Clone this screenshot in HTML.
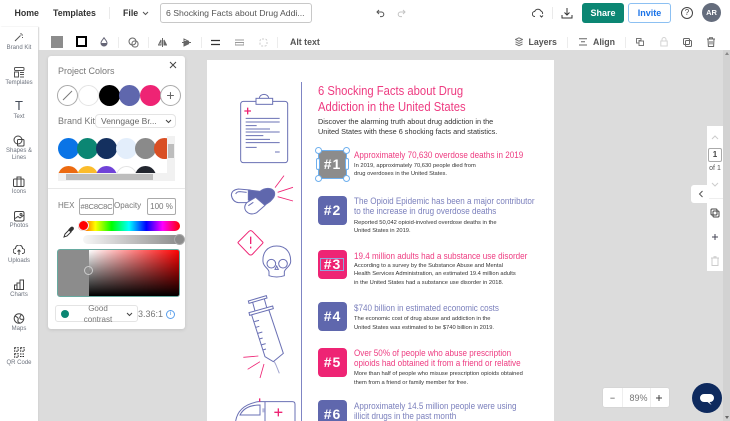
<!DOCTYPE html>
<html><head><meta charset="utf-8"><style>
*{box-sizing:border-box}
html,body{margin:0;padding:0;width:730px;height:421px;overflow:hidden;background:#dcdcdc;font-family:"Liberation Sans",sans-serif}
.a{position:absolute;white-space:nowrap}
#r{position:relative;width:730px;height:421px;overflow:hidden}
.side{font-size:6px;color:#6c727d;text-align:center;width:38px;left:0;line-height:7px;white-space:normal}
.ic{position:absolute;fill:none;stroke:#3a4150;stroke-width:1}
.c{position:absolute;border-radius:50%;width:21px;height:21px}
.num{position:absolute;left:318px;width:29px;height:29px;border-radius:4px;color:#fff;font-size:14px;font-weight:bold;text-align:center;line-height:29px;letter-spacing:1px}
.h{position:absolute;left:354px;font-size:9px;line-height:10.300px;white-space:nowrap;transform:scaleX(.9);transform-origin:0 0}
.p{position:absolute;left:354px;font-size:5.750px;line-height:8.600px;color:#333;white-space:nowrap}
.pk{color:#ee3b80}.pu{color:#7a7fbc}
.sep{position:absolute;top:37px;width:1px;height:11px;background:#ececec}
</style></head><body><div id="r">

<!-- top bar -->
<div class="a" style="left:0;top:0;width:730px;height:27px;background:#fff;box-shadow:0 1px 1px #eee"></div>
<div class="a" style="left:14.500px;top:8px;font-size:8.800px;font-weight:bold;color:#333">Home</div>
<div class="a" style="left:53px;top:8px;font-size:8.800px;font-weight:bold;color:#333">Templates</div>
<div class="a" style="left:109px;top:7px;width:1px;height:12px;background:#eaeaea"></div>
<div class="a" style="left:123px;top:8px;font-size:8.800px;font-weight:bold;color:#333">File</div>
<svg class="ic" style="left:142px;top:11px;stroke:#555" width="7" height="5"><path d="M1 1l2.500 2.500L6 1"/></svg>
<div class="a" style="left:160px;top:3px;width:152px;height:20px;border:1px solid #c8c8c8;border-radius:3px;font-size:8.700px;color:#555;line-height:18px;padding-left:5px">6 Shocking Facts about Drug Addi...</div>
<svg class="ic" style="left:375px;top:8px;stroke:#555" width="10" height="10"><path d="M2 4h4.500a2.300 2.300 0 0 1 0 4.600H5M4 2L2 4l2 2"/></svg>
<svg class="ic" style="left:397px;top:8px;stroke:#c4c4c4" width="10" height="10"><path d="M8 4H3.500a2.300 2.300 0 0 0 0 4.600H5M6 2l2 2-2 2"/></svg>
<svg class="ic" style="left:532px;top:8px;stroke:#444" width="12" height="10"><path d="M3 8.500a2.500 2.500 0 0 1-.3-5A3.500 3.500 0 0 1 9 3a2.500 2.500 0 0 1 1.500 3M8 7.500l1.500 1.500 1.500-1.500"/></svg>
<div class="a" style="left:552px;top:7px;width:1px;height:12px;background:#eaeaea"></div>
<svg class="ic" style="left:561px;top:7px;stroke:#333" width="12" height="12"><path d="M6 1v7M3.500 5.500L6 8l2.500-2.500M1 8v3h10V8"/></svg>
<div class="a" style="left:582px;top:3px;width:42px;height:20px;background:#0b8673;border-radius:3px;color:#fff;font-weight:bold;font-size:9px;text-align:center;line-height:20px">Share</div>
<div class="a" style="left:628px;top:3px;width:43px;height:20px;background:#fff;border:1px solid #8cc0f2;border-radius:3px;color:#1a73e8;font-weight:bold;font-size:9px;text-align:center;line-height:18px">Invite</div>
<div class="a" style="left:681px;top:7px;width:12px;height:12px;border:1px solid #444;border-radius:50%;color:#444;font-size:8px;text-align:center;line-height:10px">?</div>
<div class="a" style="left:702px;top:3px;width:19px;height:19px;border-radius:50%;background:#646c7c;color:#fff;font-size:7.500px;font-weight:bold;text-align:center;line-height:19px">AR</div>

<!-- toolbar -->
<div class="a" style="left:38px;top:27px;width:692px;height:23px;background:#fff"></div>
<div class="a" style="left:51px;top:36px;width:12px;height:12px;background:#8c8c8c"></div>
<div class="a" style="left:76px;top:36px;width:11px;height:11px;border:2.500px solid #000;background:#fff"></div>
<svg class="ic" style="left:100px;top:37px;stroke:#667" width="8" height="10"><path d="M4 .8C3 2.500 1 4 1 6a3 3 0 0 0 6 0C7 4 5 2.500 4 .8z"/><path d="M1.500 6h5v1.500l-1.500 1h-2l-1.500-1z" fill="#667" stroke="none"/></svg>
<div class="sep" style="left:118px"></div>
<svg class="ic" style="left:128px;top:37px;stroke:#666" width="11" height="11"><circle cx="4.500" cy="4.500" r="3.500"/><rect x="4" y="4" width="6" height="6" rx="2.500"/></svg>
<div class="sep" style="left:148px"></div>
<svg class="ic" style="left:158px;top:38px;stroke:#666" width="9" height="9"><path d="M4.500 0v9M3 2v5H.5z"/><path d="M6 2v5h2.500z" fill="#666"/></svg>
<svg class="ic" style="left:182px;top:38px;stroke:#666" width="9" height="9"><path d="M0 4.500h9M2 3.500V1l5 2.500z"/><path d="M2 5.500V8l5-2.500z" fill="#666"/></svg>
<div class="sep" style="left:201px"></div>
<svg class="ic" style="left:211px;top:39px;stroke:#333" width="9" height="7"><path d="M0 1.500h9M0 5.500h9" stroke-width="1.200"/></svg>
<svg class="ic" style="left:235px;top:39px;stroke:#999" width="9" height="7"><path d="M0 1h9M0 3.500h9v2.500H0z"/></svg>
<svg class="ic" style="left:259px;top:38px;stroke:#ccc;stroke-dasharray:2 1.500" width="9" height="9"><rect x="1" y="1" width="7" height="7" rx="2"/></svg>
<div class="sep" style="left:277px"></div>
<div class="a" style="left:290px;top:37px;font-size:8.800px;font-weight:bold;color:#555">Alt text</div>
<svg class="ic" style="left:515px;top:37px;stroke:#777" width="8" height="10"><path d="M4 .8l3.500 1.700L4 4.200.5 2.500zM.5 4.800l3.500 1.700 3.500-1.700M.5 7l3.500 1.700L7.500 7"/></svg>
<div class="a" style="left:528.500px;top:37px;font-size:8.800px;font-weight:bold;color:#555">Layers</div>
<div class="sep" style="left:567px"></div>
<svg class="ic" style="left:579px;top:38px;stroke:#666" width="8" height="8"><path d="M0 .8h8M2 3.800h4M0 7h8"/></svg>
<div class="a" style="left:593px;top:37px;font-size:8.800px;font-weight:bold;color:#555">Align</div>
<div class="sep" style="left:625px"></div>
<svg class="ic" style="left:636px;top:38px;stroke:#777" width="8" height="8"><path d="M.5.500h4.500v2H3v2.500H.5zM3 3h4.500v4.500H3z"/></svg>
<svg class="ic" style="left:660px;top:37px;stroke:#d4d4d4" width="8" height="10"><rect x=".8" y="4" width="6.400" height="5"/><path d="M2 4V2.500a2 2 0 0 1 4 0V4"/></svg>
<svg class="ic" style="left:683px;top:38px;stroke:#666" width="9" height="9"><rect x=".5" y=".5" width="6" height="6" rx="1"/><rect x="2.500" y="2.500" width="6" height="6" rx="1"/></svg>
<svg class="ic" style="left:707px;top:37px;stroke:#666" width="8" height="10"><path d="M0 2h8M2.500 2V.7h3V2M1 2l.4 7.500h5.200L7 2M3 4v3.500M5 4v3.500"/></svg>

<!-- scrollbar -->
<div class="a" style="left:723px;top:50px;width:7px;height:371px;background:#d2d2d2"></div>
<div class="a" style="left:725px;top:52px;border-left:2px solid transparent;border-right:2px solid transparent;border-bottom:3px solid #888"></div>
<div class="a" style="left:725px;top:416px;border-left:2px solid transparent;border-right:2px solid transparent;border-top:3px solid #666"></div>

<!-- sidebar -->
<div class="a" style="left:0;top:27px;width:38px;height:394px;background:#fff;box-shadow:1px 0 1px #d4d4d4"></div>
<svg class="ic" style="left:14px;top:32px;stroke:#555" width="10" height="10"><path d="M1 9l5.500-5.500M7 1v1.500M9 3H7.500M8.500 5v1" /></svg>
<div class="a side" style="top:45px">Brand Kit</div>
<svg class="ic" style="left:14px;top:67px;stroke:#555" width="11" height="11"><rect x=".5" y=".5" width="9.500" height="3" rx="1"/><rect x=".5" y="5" width="4" height="5"/><path d="M6 5.500h4M6 7.500h4M6 10h4"/></svg>
<div class="a side" style="top:79.500px">Templates</div>
<div class="a" style="left:0;width:38px;top:99px;text-align:center;font-size:13px;line-height:14px;color:#444b58">T</div>
<div class="a side" style="top:113.500px">Text</div>
<svg class="ic" style="left:13px;top:135px;stroke:#444" width="12" height="12"><circle cx="5" cy="5" r="4"/><rect x="4.500" y="4.500" width="6.500" height="6.500" rx="1"/></svg>
<div class="a side" style="top:148px;line-height:7px">Shapes &amp;<br>Lines</div>
<svg class="ic" style="left:13px;top:176px;stroke:#444" width="12" height="11"><rect x=".5" y="3" width="10.500" height="7.500" rx="1"/><path d="M4 3V1h4v2M4 3v7.500M8 3v7.500"/></svg>
<div class="a side" style="top:189px">Icons</div>
<svg class="ic" style="left:14px;top:211px;stroke:#444" width="11" height="11"><rect x=".5" y=".5" width="9.500" height="9.500" rx="1.500"/><path d="M1 7.500l3-2 2 1.500 4-3"/><circle cx="7" cy="3.500" r="1"/></svg>
<div class="a side" style="top:223px">Photos</div>
<svg class="ic" style="left:13px;top:245px;stroke:#444" width="12" height="10"><path d="M3 8.500a2.500 2.500 0 0 1-.5-5A3.500 3.500 0 0 1 9.500 3.500 2.500 2.500 0 0 1 9 8.500M6 10V5M4.500 6.500L6 5l1.500 1.500"/></svg>
<div class="a side" style="top:257.500px">Uploads</div>
<svg class="ic" style="left:13px;top:279px;stroke:#444" width="12" height="11"><path d="M1 10.500h10M1.500 10.500V6h2.500v4.500M4 10.500V4h3v6.500M7 10.500V1h3.500v9.500"/></svg>
<div class="a side" style="top:291.500px">Charts</div>
<svg class="ic" style="left:13px;top:313px;stroke:#444" width="12" height="11"><circle cx="6" cy="5.500" r="4.800"/><path d="M2 3c2 1 4 2 3 4s2 3 2 3M8 1.500c0 2-2 2-1 4s3 0 4 1"/></svg>
<div class="a side" style="top:325.500px">Maps</div>
<svg class="ic" style="left:14px;top:347px;stroke:#222;stroke-dasharray:1.500 1" width="11" height="11"><rect x=".7" y=".7" width="3.500" height="3.500"/><rect x="6.700" y=".7" width="3.500" height="3.500"/><rect x=".7" y="6.700" width="3.500" height="3.500"/><path d="M6 7h4M6 9.500h4"/></svg>
<div class="a side" style="top:360px">QR Code</div>

<!-- color panel -->
<div class="a" style="left:48px;top:56px;width:137px;height:273px;background:#fff;border-radius:3px;box-shadow:0 1px 3px #c4c4c4"></div>
<div class="a" style="left:58px;top:66px;font-size:9px;color:#777">Project Colors</div>
<svg class="ic" style="left:169px;top:61px;stroke:#444" width="8" height="8"><path d="M1 1l6 6M7 1L1 7"/></svg>
<div class="c" style="left:57px;top:85px;border:1px solid #aaa;background:#fff"></div>
<svg class="ic" style="left:62px;top:90px;stroke:#777" width="11" height="11"><path d="M1 10L10 1"/></svg>
<div class="c" style="left:78px;top:85px;border:1px solid #e4e4e4;background:#fff"></div>
<div class="c" style="left:99px;top:85px;background:#000"></div>
<div class="c" style="left:119px;top:85px;background:#5f67ad"></div>
<div class="c" style="left:140px;top:85px;background:#ee2474"></div>
<div class="c" style="left:160px;top:85px;border:1px solid #aaa;background:#fff;color:#666;font-size:14px;line-height:18px;text-align:center">+</div>
<div class="a" style="left:58px;top:116px;font-size:9px;color:#777">Brand Kit</div>
<div class="a" style="left:95px;top:114px;width:81px;height:14px;border:1px solid #e4e4e4;border-radius:4px;font-size:8.500px;color:#666;line-height:13px;padding-left:5px">Venngage Br...</div>
<svg class="ic" style="left:165px;top:119px;stroke:#444" width="7" height="5"><path d="M1 1l2.500 2.500L6 1"/></svg>

<div class="a" style="left:58px;top:136px;width:109px;height:37px;overflow:hidden">
<div class="c" style="left:0;top:2px;background:#0a74e6"></div>
<div class="c" style="left:19px;top:2px;background:#0b8673"></div>
<div class="c" style="left:38px;top:2px;background:#14305f"></div>
<div class="c" style="left:58px;top:2px;background:#e3eefb"></div>
<div class="c" style="left:77px;top:2px;background:#8a8a8a"></div>
<div class="c" style="left:96px;top:2px;background:#d94f24"></div>
<div class="c" style="left:0;top:30px;background:#ec6a10"></div>
<div class="c" style="left:19px;top:30px;background:#fbbc2c"></div>
<div class="c" style="left:38px;top:30px;background:#7043d8"></div>
<div class="c" style="left:58px;top:30px;background:#fff;border:1px solid #e4e4e4"></div>
<div class="c" style="left:77px;top:30px;background:#22262f"></div>
</div>
<div class="a" style="left:167px;top:136px;width:8px;height:45px;background:#f1f1f1"></div>
<div class="a" style="left:168px;top:144px;width:6px;height:14px;background:#bdbdbd"></div>
<div class="a" style="left:58px;top:173px;width:117px;height:8px;background:#f1f1f1"></div>
<div class="a" style="left:66px;top:174px;width:87px;height:6px;background:#bdbdbd"></div>
<div class="a" style="left:48px;top:188px;width:137px;height:1px;background:#e8e8e8"></div>

<div class="a" style="left:58px;top:201px;font-size:8px;color:#777">HEX</div>
<div class="a" style="left:79px;top:198px;width:35px;height:17px;border:1px solid #aaa;border-radius:2px;font-size:7.600px;letter-spacing:-.2px;color:#777;line-height:15px;text-align:center;overflow:hidden">#8C8C8C</div>
<div class="a" style="left:114px;top:201px;font-size:8px;color:#777">Opacity</div>
<div class="a" style="left:147px;top:198px;width:29px;height:17px;border:1px solid #aaa;border-radius:2px;font-size:8px;color:#777;line-height:15px;text-align:center">100 %</div>
<svg class="ic" style="left:63px;top:226px;stroke:#333" width="11" height="12"><path d="M1 11l1-3 4-4 2 2-4 4z"/><path d="M6 3.500L8 1.500a1.300 1.300 0 0 1 2 2L8 5.500z" fill="#333"/></svg>
<div class="a" style="left:78px;top:221px;width:102px;height:10px;border-radius:5px;background:linear-gradient(90deg,#f00,#ff0 17%,#0f0 33%,#0ff 50%,#00f 67%,#f0f 83%,#f00)"></div>
<div class="a" style="left:78px;top:220px;width:11px;height:11px;border-radius:50%;background:#f00;border:1px solid #eee"></div>
<div class="a" style="left:83px;top:235px;width:97px;height:9px;border-radius:5px;background:linear-gradient(90deg,#f6f6f6,#8c8c8c)"></div>
<div class="a" style="left:174px;top:234px;width:11px;height:11px;border-radius:50%;background:#8c8c8c;border:1px solid #aaa"></div>
<div class="a" style="left:57px;top:249px;width:123px;height:48px;border:1px solid #67aaa0;border-radius:3px;overflow:hidden;background:#8c8c8c">
<div class="a" style="left:31px;top:0;width:91px;height:46px;background:linear-gradient(to bottom,transparent,#000),linear-gradient(to right,#fff,#f00)"></div>
</div>
<div class="a" style="left:84px;top:266px;width:9px;height:9px;border-radius:50%;border:1px solid #ccc"></div>
<div class="a" style="left:55px;top:305px;width:83px;height:17px;border:1px solid #e4e4e4;border-radius:3px"></div>
<div class="a" style="left:61px;top:310px;width:8px;height:8px;border-radius:50%;background:#0b8673"></div>
<div class="a" style="left:74px;top:303px;width:48px;font-size:8px;line-height:11px;color:#777;text-align:center;white-space:normal">Good<br>contrast</div>
<svg class="ic" style="left:126px;top:312px;stroke:#444" width="7" height="5"><path d="M1 1l2.500 2.500L6 1"/></svg>
<div class="a" style="left:138px;top:309px;font-size:9px;color:#777">3.36:1</div>
<div class="a" style="left:166px;top:310px;width:9px;height:9px;border-radius:50%;border:1px solid #5a9fec;color:#3a8be0;font-size:6px;text-align:center;line-height:7px">i</div>

<!-- page -->
<div class="a" style="left:207px;top:60px;width:347px;height:361px;background:#fff"></div>
<div class="a" style="left:301px;top:82px;width:1px;height:339px;background:#7f85c4"></div>

<!-- illustrations -->
<svg class="a" style="left:205px;top:60px" width="96" height="361" viewBox="0 0 288 1083" fill="none" stroke="#6a70b4" stroke-width="3">
<!-- clipboard -->
<rect x="107" y="124" width="141" height="184" rx="8"/>
<path d="M163 115a14 12 0 0 1 28 0"/>
<rect x="153" y="115" width="50" height="18" fill="#fff"/>
<path d="M122 175h102M122 186h102M122 197h33M122 207h73M122 216h102M122 227h53M122 238h73M122 248h102M122 262h33M210 276h14"/>
<path d="M128 143v20M118 153h20" stroke="#ee2474" stroke-width="4"/>
<!-- pills -->
<path d="M135 390L100 387Q80 390 79 405Q82 425 100 428L135 428z" fill="#fff"/>
<path d="M92 402Q95 395 105 395L125 397"/>
<path d="M130 390L165 394C180 382 200 382 208 395C212 408 205 415 195 425L165 445L130 420z" fill="#5f67ad"/>
<path d="M152 412L125 428Q115 440 122 452Q135 468 155 458L180 436z" fill="#fff"/>
<path d="M130 437L145 427"/>
<path d="M210 383L237 347M218 397L264 382M218 410L264 423" stroke="#ee2474" stroke-width="2.500"/>
<!-- alert -->
<path d="M132 514L100 546Q98 548 100 550L132 583Q137 587 142 583L173 550Q175 548 173 546L142 514Q137 510 132 514z" stroke="#ee2474"/>
<path d="M137 530v22M137 560v5" stroke="#ee2474" stroke-width="4"/>
<!-- skull -->
<path d="M215 558C185 558 172 580 174 605C175 620 190 625 192 635L192 647Q215 655 238 647L238 635C240 625 256 620 257 605C258 580 245 558 215 558z" fill="#fff"/>
<circle cx="199" cy="611" r="13"/><circle cx="234" cy="611" r="13"/>
<path d="M215 618l-5 10h10z"/>
<!-- syringe -->
<g transform="translate(0,570)">
<path d="M130 153L184 137L186 144L132 160zM143 157L150 183M178 147L185 172"/>
<path d="M132 188L203 168L205 176L134 196z" fill="#fff"/>
<path d="M140 195L180 320L205 335L235 310L191 178"/>
<path d="M148 215l14-4M153 232l10-3M158 250l14-4M163 267l10-3M168 285l14-4M173 300l10-3"/>
<path d="M208 335l5 10M213 345l10 25" stroke="#a0a4cf"/>
</g>
<path d="M115 892L160 888M128 928L165 905M165 954L177 912" stroke="#ee2474" stroke-width="2.500"/>
<!-- ambulance -->
<path d="M92 1083Q100 1035 160 1025H262Q270 1025 270 1033V1083"/>
<path d="M105 1065Q120 1035 165 1035V1065z"/>
<path d="M180 1025v58"/>
<rect x="172" y="1045" width="6" height="12" fill="#b8bbdc" stroke="none"/>
<path d="M220 1045v24M208 1057h24M164 1015v10" stroke="#ee2474" stroke-width="4"/>
</svg>

<!-- text -->
<div class="a pk" style="left:318px;top:83px;font-size:12.500px;line-height:16px;transform:scaleX(.9);transform-origin:0 0">6 Shocking Facts about Drug<br>Addiction in the United States</div>
<div class="a" style="left:318px;top:117px;font-size:7.300px;line-height:10px;color:#333">Discover the alarming truth about drug addiction in the<br>United States with these 6 shocking facts and statistics.</div>

<div class="num" style="top:150px;background:#8c8c8c">#1</div>
<div class="a" style="left:318px;top:150px;width:29px;height:29px;border:1px solid #6fb0ee"></div>
<div class="a" style="left:315px;top:147px;width:7px;height:7px;border-radius:50%;background:#fff;border:1px solid #6fb0ee"></div>
<div class="a" style="left:343px;top:147px;width:7px;height:7px;border-radius:50%;background:#fff;border:1px solid #6fb0ee"></div>
<div class="a" style="left:315px;top:175px;width:7px;height:7px;border-radius:50%;background:#fff;border:1px solid #6fb0ee"></div>
<div class="a" style="left:343px;top:175px;width:7px;height:7px;border-radius:50%;background:#fff;border:1px solid #6fb0ee"></div>
<div class="a" style="left:316px;top:158px;width:4px;height:12px;border-radius:2px;background:#fff;border:1px solid #6fb0ee"></div>
<div class="a" style="left:345px;top:158px;width:4px;height:12px;border-radius:2px;background:#fff;border:1px solid #6fb0ee"></div>
<div class="h pk" style="top:150px">Approximately 70,630 overdose deaths in 2019</div>
<div class="p" style="top:161.500px">In 2019, approximately 70,630 people died from<br>drug overdoses in the United States.</div>

<div class="num" style="top:196px;background:#5f67ad">#2</div>
<div class="h pu" style="top:196px">The Opioid Epidemic has been a major contributor<br>to the increase in drug overdose deaths</div>
<div class="p" style="top:218.500px">Reported 50,042 opioid-involved overdose deaths in the<br>United States in 2019.</div>

<div class="num" style="top:250px;background:#ee2474">#3</div>
<div class="a" style="left:320px;top:258px;width:24px;height:13px;border:1px solid #8fa6dc"></div>
<div class="h pk" style="top:251px">19.4 million adults had a substance use disorder</div>
<div class="p" style="top:261.500px">According to a survey by the Substance Abuse and Mental<br>Health Services Administration, an estimated 19.4 million adults<br>in the United States had a substance use disorder in 2018.</div>

<div class="num" style="top:302px;background:#5f67ad">#4</div>
<div class="h pu" style="top:303px">$740 billion in estimated economic costs</div>
<div class="p" style="top:315px">The economic cost of drug abuse and addiction in the<br>United States was estimated to be $740 billion in 2019.</div>

<div class="num" style="top:348px;background:#ee2474">#5</div>
<div class="h pk" style="top:348px">Over 50% of people who abuse prescription<br>opioids had obtained it from a friend or relative</div>
<div class="p" style="top:370px">More than half of people who misuse prescription opioids obtained<br>them from a friend or family member for free.</div>

<div class="num" style="top:400px;background:#5f67ad">#6</div>
<div class="h pu" style="top:401px">Approximately 14.5 million people were using<br>illicit drugs in the past month</div>

<!-- page nav -->
<div class="a" style="left:707px;top:126px;width:16px;height:145px;background:#fff"></div>
<svg class="ic" style="left:711px;top:135px;stroke:#ccc" width="8" height="5"><path d="M1 4l3-3 3 3"/></svg>
<div class="a" style="left:708px;top:148px;width:14px;height:14px;border:1px solid #aaa;border-radius:2px;font-size:8px;font-weight:bold;color:#444;text-align:center;line-height:12px">1</div>
<div class="a" style="left:707px;top:165px;width:16px;text-align:center;font-size:7px;color:#555">of 1</div>
<svg class="ic" style="left:711px;top:182px;stroke:#ccc" width="8" height="5"><path d="M1 1l3 3 3-3"/></svg>
<div class="a" style="left:707px;top:198px;width:16px;height:1px;background:#eee"></div>
<div class="a" style="left:691px;top:185px;width:18px;height:18px;background:#fff;border-radius:3px 0 0 3px"></div>
<svg class="ic" style="left:698px;top:190px;stroke:#555" width="6" height="8"><path d="M4.500 1L1.500 4l3 3"/></svg>
<svg class="ic" style="left:710px;top:208px;stroke:#444" width="10" height="10"><rect x="1" y="1" width="6" height="6" rx="1"/><rect x="3" y="3" width="6" height="6" rx="1"/></svg>
<svg class="ic" style="left:711px;top:233px;stroke:#445" width="8" height="8"><path d="M4 1v6M1 4h6"/></svg>
<svg class="ic" style="left:711px;top:256px;stroke:#ccc" width="8" height="10"><path d="M0 2h8M1 2v7.500h6V2M3 2V.7h2V2"/></svg>

<!-- zoom -->
<div class="a" style="left:603px;top:388px;width:66px;height:19px;background:#fff;border-radius:2px;box-shadow:0 0 1px #bbb"></div>
<div class="a" style="left:622px;top:388px;width:1px;height:19px;background:#eee"></div>
<div class="a" style="left:650px;top:388px;width:1px;height:19px;background:#eee"></div>
<div class="a" style="left:603px;top:393px;width:19px;text-align:center;font-size:9px;color:#444">−</div>
<div class="a" style="left:625px;top:393px;width:27px;text-align:center;font-size:9px;color:#777">89%</div>
<svg class="ic" style="left:655px;top:394px;stroke:#444" width="8" height="8"><path d="M4 1v6M1 4h6"/></svg>

<!-- chat -->
<div class="a" style="left:692px;top:383px;width:30px;height:30px;border-radius:50%;background:#0e2a5e"></div>
<svg class="a" style="left:699px;top:393px" width="16" height="13"><path d="M5 1h6a4 4 0 0 1 0 8h-.5l2 3-4-3H5a4 4 0 0 1 0-8z" fill="#fff"/></svg>
</div></body></html>
